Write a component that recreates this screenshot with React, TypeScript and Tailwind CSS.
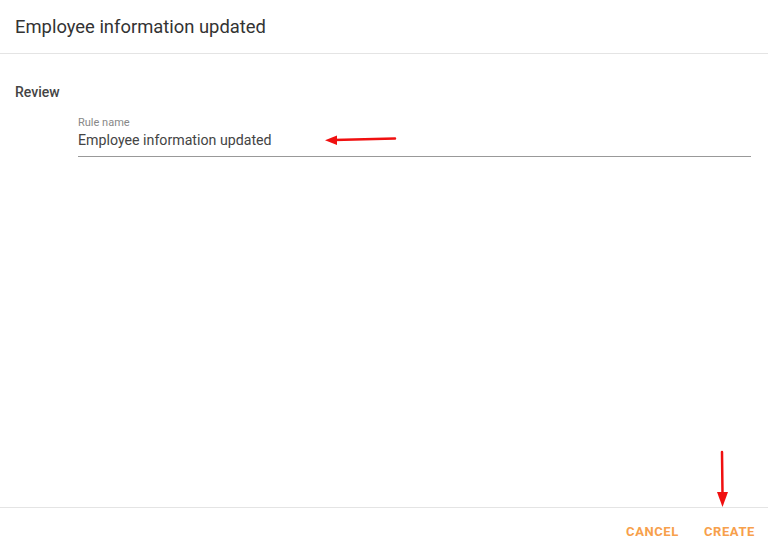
export default function App() {
  return (
    <div
      className="relative flex h-[551px] w-[768px] flex-col bg-white text-[#333]"
      style={{ fontFamily: 'Roboto, "Noto Sans", sans-serif' }}
    >
      {/* header */}
      <div className="flex h-[54px] items-center border-b border-[#e4e4e4] px-[15px]">
        <h1 className="text-[18.4px] font-normal text-[#333]">Employee information updated</h1>
      </div>

      {/* body */}
      <div className="flex-1 pt-[28px]">
        <div className="px-[15px] text-[14px] font-medium leading-5 text-[#444]">Review</div>
        <div className="ml-[78px] mr-[17px] mt-[14px]">
          <div className="text-[11px] leading-[13px] text-[#888]">Rule name</div>
          <div className="relative border-b border-[#999] pb-[6px] pt-[1px] text-[14.2px] leading-[20px] text-[#444]">
            Employee information updated
            <svg className="absolute left-[246px] top-[4px]" width="74" height="14" viewBox="0 0 74 14">
              <line x1="10" y1="7" x2="71" y2="5.5" stroke="#f01010" strokeWidth="2.5" strokeLinecap="round" />
              <polygon points="1,7.3 13,2.5 13,12" fill="#f01010" />
            </svg>
          </div>
        </div>
      </div>

      {/* footer */}
      <div className="relative flex h-[44px] items-center justify-end gap-[25px] border-t border-[#e4e4e4] pr-[13px] pt-[4px]">
        <svg className="absolute right-[40px] top-[-58px]" width="12" height="58" viewBox="0 0 12 58">
          <line x1="6" y1="2" x2="6.5" y2="44" stroke="#f01010" strokeWidth="2.5" strokeLinecap="round" />
          <polygon points="1,42 12,42 6.5,57" fill="#f01010" />
        </svg>
        <button className="text-[13px] font-bold tracking-[0.6px] text-[#f7a04b]">CANCEL</button>
        <button className="text-[13px] font-bold tracking-[0.6px] text-[#f7a04b]">CREATE</button>
      </div>
    </div>
  );
}
